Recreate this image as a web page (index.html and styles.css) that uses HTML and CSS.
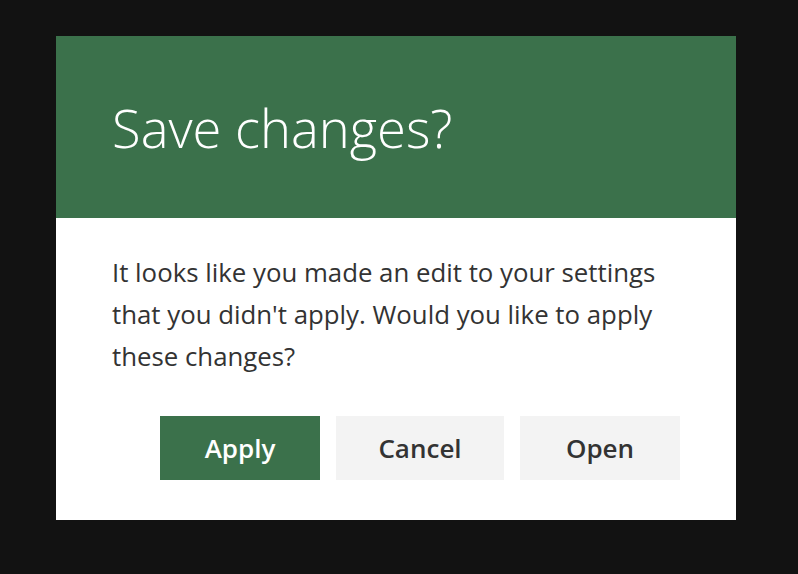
FILE: index.html
```html
<!DOCTYPE html>
<html lang="en">
<head>
<meta charset="utf-8">
<title>Save changes?</title>
<link rel="stylesheet" href="styles.css">
</head>
<body>
<div class="dialog">
  <div class="dialog-header">
    <h1 class="dialog-title">Save changes?</h1>
  </div>
  <div class="dialog-body">
    <p class="dialog-text">It looks like you made an edit to your settings that you didn't apply. Would you like to apply these changes?</p>
    <div class="dialog-actions">
      <button class="btn btn-primary">Apply</button>
      <button class="btn btn-secondary btn-wide">Cancel</button>
      <button class="btn btn-secondary">Open</button>
    </div>
  </div>
</div>
</body>
</html>
```
FILE: styles.css
```css
html, body {
  margin: 0;
  padding: 0;
}
body {
  background: #121212;
  width: 798px;
  height: 574px;
  padding: 36px 0 0 56px;
  box-sizing: border-box;
  font-family: "Open Sans", "Noto Sans", sans-serif;
}
.dialog {
  width: 680px;
  background: #ffffff;
}
.dialog-header {
  background: #3b714b;
  height: 182px;
  box-sizing: border-box;
  padding: 60px 56px 0 56px;
}
.dialog-title {
  margin: 0;
  font-weight: 300;
  font-size: 52.5px;
  line-height: 64px;
  color: #ffffff;
}
.dialog-body {
  padding: 33px 56px 40px 56px;
}
.dialog-text {
  margin: 0;
  font-size: 25.8px;
  line-height: 42px;
  color: #333333;
  width: 568px;
}
.dialog-actions {
  display: flex;
  justify-content: flex-end;
  gap: 16px;
  margin-top: 39px;
}
.btn {
  width: 160px;
  height: 64px;
  border: none;
  font-family: "Open Sans", "Noto Sans", sans-serif;
  font-size: 26px;
  font-weight: 600;
  padding: 0;
}
.btn-wide {
  width: 168px;
}
.btn-primary {
  background: #3b714b;
  color: #ffffff;
}
.btn-secondary {
  background: #f3f3f3;
  color: #333333;
}
```
